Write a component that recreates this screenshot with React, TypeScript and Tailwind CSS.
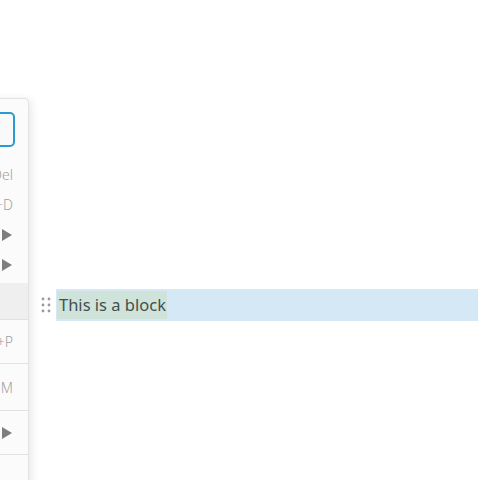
import React from "react";

function Row({ children, h = "h-[30px]" }: { children: React.ReactNode; h?: string }) {
  return (
    <div className={`${h} flex items-center justify-end pr-[15px] text-[14px] font-light text-[#9f9f9f]`}>{children}</div>
  );
}

function Tri() {
  return (
    <svg width="10" height="12" viewBox="0 0 10 12" className="mr-[1px]">
      <path d="M0 0 L10 6 L0 12 Z" fill="#7d7d7d" />
    </svg>
  );
}

export default function App() {
  return (
    <div
      className="relative h-[480px] w-[478px] overflow-hidden bg-white"
      style={{ fontFamily: '"Noto Sans", "Open Sans", sans-serif' }}
    >
      <div className="absolute left-[-230px] top-[98px] w-[259px] h-[420px] bg-[#fbfbfb] border border-[#e3e3e3] rounded-[4px] shadow-[2px_2px_10px_rgba(0,0,0,0.10)]">
        <div className="pt-[13px] pr-[13px] pl-[10px]">
          <div className="h-[35px] rounded-[5px] border-2 border-[#2a9bd0] bg-[#f9f9f9]" />
        </div>
        <div className="pt-[12px]">
          <Row>Ctrl+Del</Row>
          <Row h="h-[31px]">Ctrl+D</Row>
          <Row><Tri /></Row>
          <Row><Tri /></Row>
          <div className="h-[3px]" />
          <div className="h-[36px] bg-[#efefef]" />
          <div className="border-t border-[#e2e2e2]">
            <Row h="h-[43px]">Ctrl+P</Row>
          </div>
          <div className="border-t border-[#e2e2e2]">
            <Row h="h-[46px]">Ctrl+M</Row>
          </div>
          <div className="border-t border-[#e2e2e2]">
            <Row h="h-[43px]"><Tri /></Row>
          </div>
          <div className="border-t border-[#e2e2e2]">
            <Row h="h-[43px]"> </Row>
          </div>
        </div>
      </div>

      <div className="pt-[289px] pl-[36px] flex">
        <div className="w-[20px] h-[32px] flex items-center justify-center">
          <svg width="10" height="16" viewBox="0 0 10 16">
            {[2, 8].map((x) =>
              [2, 8, 14].map((y) => <circle key={`${x}-${y}`} cx={x} cy={y} r="1.4" fill="#9a9a9a" />)
            )}
          </svg>
        </div>
        <div className="flex-1 h-[32px] bg-[#d4e9f5] flex items-center">
          <span className="ml-[1px] pl-[2px] pr-[1px] bg-[#d0e3db] text-[16.5px] leading-[28px] text-[#42504f]">
            This is a block
          </span>
        </div>
      </div>
    </div>
  );
}
